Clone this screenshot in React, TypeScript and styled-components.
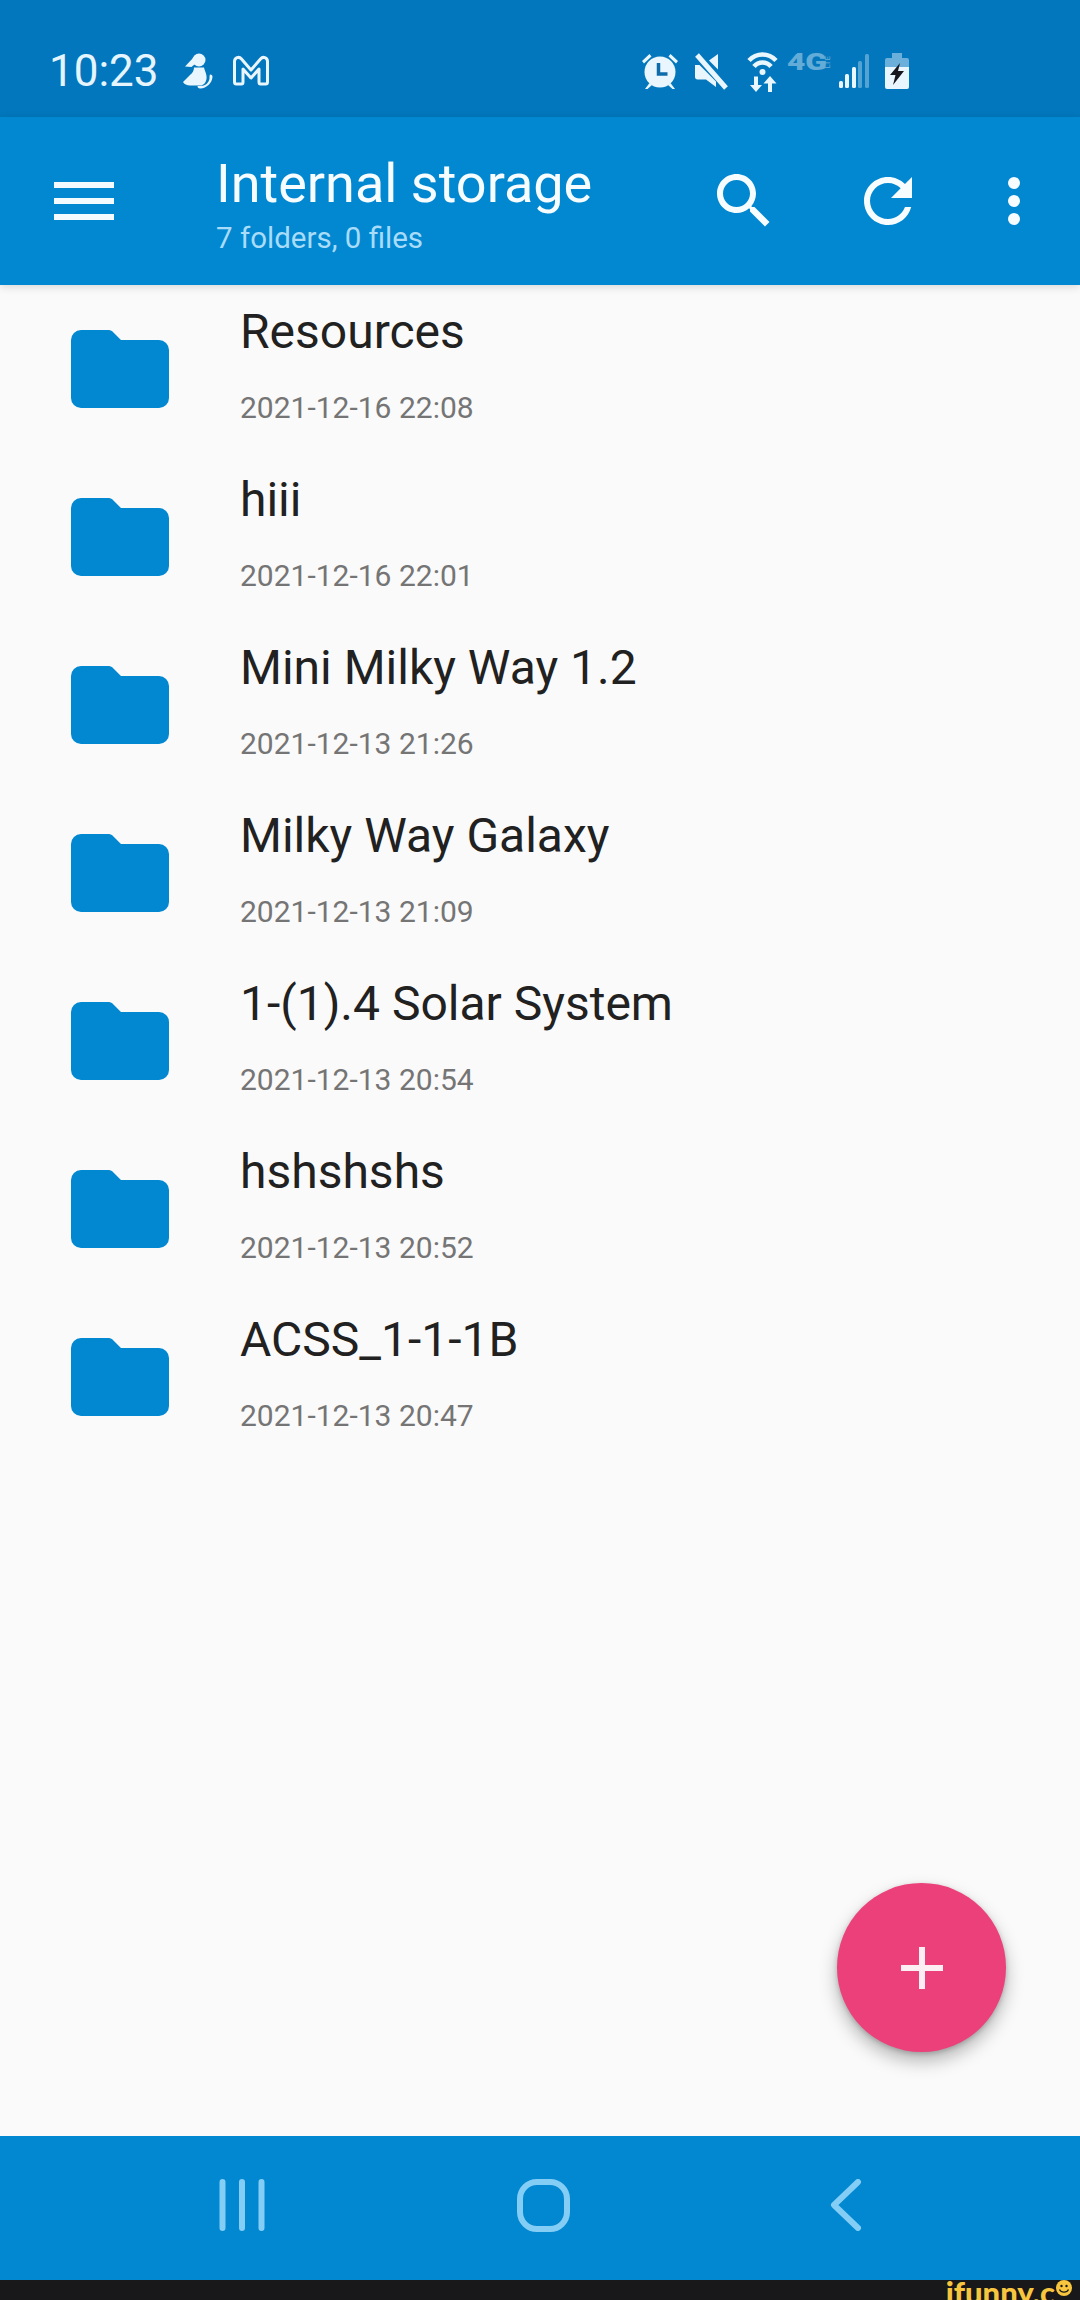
import React from 'react';
import styled, { createGlobalStyle } from 'styled-components';

const folders = [
  { name: 'Resources', date: '2021-12-16 22:08' },
  { name: 'hiii', date: '2021-12-16 22:01' },
  { name: 'Mini Milky Way 1.2', date: '2021-12-13 21:26' },
  { name: 'Milky Way Galaxy', date: '2021-12-13 21:09' },
  { name: '1-(1).4 Solar System', date: '2021-12-13 20:54' },
  { name: 'hshshshs', date: '2021-12-13 20:52' },
  { name: 'ACSS_1-1-1B', date: '2021-12-13 20:47' },
];

const FolderIcon = () => (
  <FolderSvg viewBox="0 0 98 78">
    <path d="M10 0H38a5 5 0 0 1 3.5 1.5L50 10H88a10 10 0 0 1 10 10V68a10 10 0 0 1-10 10H10A10 10 0 0 1 0 68V10A10 10 0 0 1 10 0z" />
  </FolderSvg>
);

const App = () => (
  <>
    <GlobalStyle />
    <Screen>
      <StatusBar>
        <Clock>10:23</Clock>
        <StatusSvg $left={23} width={31} height={36} viewBox="0 0 31 36">
          <circle cx="17" cy="7" r="6.500" />
          <path d="M12 4L3 13.500l6.500.5 4-3.500z" />
          <path d="M12 14.500h10c.5 3 2 5 2.500 8.500.500 4-1 8-5 9.500H8c-3 0-6-1.500-7-3.500l7-7c2.500-2 4-4 4-7.500z" />
          <path d="M28 21.500c2 0 2.500 1 2.500 2.500-.5 6.500-6 11-12 11.500-2 .2-3-1-3-2.500h3.500c4 0 8-3 8.500-7.500 0-2 0-3 .5-4z" />
        </StatusSvg>
        <StatusSvg $left={19} width={38} height={32} viewBox="0 0 38 32">
          <path d="M2.500 27V6.500C2.500 2.500 7 1 9.500 4L19 15 28.500 4C31 1 35.500 2.500 35.500 6.500V27c0 1-.5 2-2 2h-5c-1 0-1.500-1-1.500-2V14l-8 9-8-9v13c0 1-.5 2-1.500 2h-5c-1.500 0-2-1-2-2z" fill="none" stroke="#eaf6fd" strokeWidth="3" strokeLinejoin="round" />
        </StatusSvg>
        <StatusIcons>
          <StatusSvg width={38} height={36} viewBox="0 0 38 36">
            <circle cx="19" cy="19" r="15.500" />
            <path d="M1 8L8.500 1l2 2.500L3 10.500zM37 8L29.500 1l-2 2.500L35 10.500zM4 36l4.500-6 2.500 2-4.500 4zM34 36l-4.500-6-2.500 2 4.500 4z" />
            <path d="M17.500 10v11h9" fill="none" stroke="#0f6cab" strokeWidth="3.500" />
          </StatusSvg>
          <StatusSvg $left={16} width={33} height={37} viewBox="0 0 33 37">
            <path d="M0 12h4.500L21 28.500V34l-10-7.500H2.500C1 26.500 0 25.500 0 24z" />
            <path d="M23 1v15.500L14 7.500z" />
            <path d="M2 2l29 33" stroke="#eaf6fd" strokeWidth="5" fill="none" />
          </StatusSvg>
          <StatusSvg $left={19} width={31} height={41} viewBox="0 0 31 41">
            <path d="M2 9.500C9.500 1.500 21.500 1.500 29 9.500M7 15.500C11.500 10 19.500 10 24 15.500" fill="none" stroke="#eaf6fd" strokeWidth="4.500" />
            <circle cx="15.500" cy="21" r="3" />
            <path d="M7 25.500h4v8.500h4l-6 7-6-7h4zM23 25l6.500 7.500h-4.500V41h-4v-8.500H16.500z" />
          </StatusSvg>
          <NetworkType>
            <NetworkLabel>4G</NetworkLabel>
            <LteLabel>LTE</LteLabel>
          </NetworkType>
          <SignalBars>
            {[7, 14, 21, 27, 34].map((h, i) => (
              <SignalBar key={h} $height={h} $dim={i > 2} />
            ))}
          </SignalBars>
          <StatusSvg $left={16} width={24} height={36} viewBox="0 0 24 36">
            <path d="M7 0h10v5h5a2 2 0 0 1 2 2v7H0V7a2 2 0 0 1 2-2h5z" opacity=".45" />
            <path d="M0 14h24v20a2 2 0 0 1-2 2H2a2 2 0 0 1-2-2z" />
            <path d="M15 10L5 22h5.500L8 32l11-14h-6z" fill="#17171f" />
          </StatusSvg>
        </StatusIcons>
      </StatusBar>

      <AppBar>
        <MenuIcon>
          <span />
          <span />
          <span />
        </MenuIcon>
        <TitleBlock>
          <Title>Internal storage</Title>
          <Subtitle>7 folders, 0 files</Subtitle>
        </TitleBlock>
        <ActionIcon $left={0} viewBox="0 0 24 24">
          <path d="M15.500 14h-.79l-.28-.27C15.410 12.590 16 11.110 16 9.500 16 5.910 13.090 3 9.500 3S3 5.910 3 9.500 5.910 16 9.500 16c1.610 0 3.090-.59 4.230-1.570l.27.28v.79l5 4.990L20.490 19l-4.990-5zm-6 0C7.010 14 5 11.990 5 9.500S7.010 5 9.500 5 14 7.010 14 9.500 11.990 14 9.500 14z" />
        </ActionIcon>
        <ActionIcon $left={72} viewBox="0 0 24 24">
          <path d="M17.650 6.350C16.200 4.900 14.210 4 12 4c-4.420 0-7.990 3.580-7.990 8s3.570 8 7.990 8c3.730 0 6.840-2.550 7.730-6h-2.080c-.82 2.330-3.040 4-5.650 4-3.310 0-6-2.690-6-6s2.690-6 6-6c1.660 0 3.140.69 4.220 1.780L13 11h7V4l-2.350 2.350z" />
        </ActionIcon>
        <ActionIcon $left={54} viewBox="0 0 24 24">
          <circle cx="12" cy="6" r="2" />
          <circle cx="12" cy="12" r="2" />
          <circle cx="12" cy="18" r="2" />
        </ActionIcon>
      </AppBar>

      <FileList>
        {folders.map((f) => (
          <FolderRow key={f.name}>
            <FolderIcon />
            <FolderText>
              <FolderName>{f.name}</FolderName>
              <FolderDate>{f.date}</FolderDate>
            </FolderText>
          </FolderRow>
        ))}
        <Fab>
          <svg width="42" height="42" viewBox="0 0 42 42">
            <path d="M18 0h6v18h18v6H24v18h-6V24H0v-6h18z" fill="#fdeef4" />
          </svg>
        </Fab>
      </FileList>

      <NavBar>
        <NavButton>
          <svg width="46" height="52" viewBox="0 0 46 52">
            <path d="M3.500 3v46M23 3v46M42.500 3v46" stroke="#84cdf5" strokeWidth="6" strokeLinecap="round" fill="none" />
          </svg>
        </NavButton>
        <NavButton>
          <HomeKey />
        </NavButton>
        <NavButton>
          <svg width="32" height="52" viewBox="0 0 32 52">
            <path d="M28 3L4 26l24 23" stroke="#84cdf5" strokeWidth="6" strokeLinecap="round" strokeLinejoin="round" fill="none" />
          </svg>
        </NavButton>
      </NavBar>

      <Watermark>
        ifunny.c
        <svg width="16" height="16" viewBox="0 0 16 16">
          <circle cx="8" cy="8" r="8" fill="#f7c63e" />
          <circle cx="5.500" cy="6" r="1.200" fill="#18181a" />
          <circle cx="10.500" cy="6" r="1.200" fill="#18181a" />
          <path d="M3.500 9.500c1.500 3.500 7.500 3.500 9 0" fill="none" stroke="#18181a" strokeWidth="1.300" />
        </svg>
      </Watermark>
    </Screen>
  </>
);

export default App;

const GlobalStyle = createGlobalStyle`
  html, body {
    margin: 0;
    padding: 0;
    background: #fafafa;
  }
  * {
    box-sizing: border-box;
  }
`;

const Screen = styled.div`
  display: flex;
  flex-direction: column;
  width: 1080px;
  height: 2300px;
  overflow: hidden;
  font-family: Roboto, "Liberation Sans", sans-serif;
  background: #fafafa;
`;

const StatusBar = styled.div`
  display: flex;
  align-items: center;
  height: 117px;
  padding: 25px 0 0 49px;
  background: #0277bd;
  flex-shrink: 0;
`;

const Clock = styled.div`
  font-size: 44px;
  color: #e6f5fd;
`;

const StatusIcons = styled.div`
  display: flex;
  align-items: center;
  margin-left: 371px;
`;

const StatusSvg = styled.svg<{ $left?: number }>`
  display: block;
  flex-shrink: 0;
  margin-left: ${(p) => p.$left || 0}px;
  fill: #eaf6fd;
`;

const NetworkType = styled.div`
  display: flex;
  align-items: center;
  justify-content: space-between;
  margin: -18px 0 0 9px;
  width: 45px;
  height: 18px;
  opacity: 0.42;
  color: #eaf6fd;
`;

const NetworkLabel = styled.span`
  display: block;
  font-size: 24px;
  line-height: 18px;
  font-weight: 900;
  transform: scaleX(1.32);
  transform-origin: left center;
`;

const LteLabel = styled.span`
  font-size: 8px;
  line-height: 8px;
  writing-mode: vertical-rl;
  transform: rotate(180deg);
`;

const SignalBars = styled.div`
  display: flex;
  align-items: flex-end;
  gap: 2.500px;
  height: 34px;
  margin-left: 7px;
`;

const SignalBar = styled.div<{ $height: number; $dim: boolean }>`
  width: 4px;
  height: ${(p) => p.$height}px;
  border-radius: 1.500px;
  background: #eaf6fd;
  opacity: ${(p) => (p.$dim ? 0.35 : 1)};
`;

const AppBar = styled.div`
  position: relative;
  z-index: 1;
  display: flex;
  align-items: center;
  height: 168px;
  padding-left: 54px;
  background: #0288d1;
  box-shadow: 0 2px 8px rgba(0, 0, 0, 0.14);
  flex-shrink: 0;
`;

const MenuIcon = styled.div`
  display: flex;
  flex-direction: column;
  gap: 10px;
  width: 60px;

  span {
    display: block;
    height: 6px;
    background: #f4fbff;
  }
`;

const TitleBlock = styled.div`
  display: flex;
  flex-direction: column;
  margin-left: 102px;
  padding-top: 8px;
  width: 492px;
`;

const Title = styled.div`
  font-size: 54px;
  line-height: 60px;
  color: #f7fcff;
`;

const Subtitle = styled.div`
  margin-top: 6px;
  font-size: 29.500px;
  line-height: 36px;
  color: #a8dcf8;
`;

const ActionIcon = styled.svg<{ $left: number }>`
  display: block;
  width: 72px;
  height: 72px;
  flex-shrink: 0;
  margin-left: ${(p) => p.$left}px;
  fill: #f7fcff;
`;

const FileList = styled.div`
  position: relative;
  flex: 1;
  display: flex;
  flex-direction: column;
`;

const FolderRow = styled.div`
  display: flex;
  align-items: center;
  height: 168px;
  padding-left: 71px;
`;

const FolderSvg = styled.svg`
  display: block;
  width: 98px;
  height: 78px;
  fill: #0288d1;
  flex-shrink: 0;
`;

const FolderText = styled.div`
  display: flex;
  flex-direction: column;
  margin-left: 71px;
  padding-bottom: 7px;
`;

const FolderName = styled.div`
  font-size: 48px;
  line-height: 54px;
  color: #212121;
`;

const FolderDate = styled.div`
  margin-top: 31px;
  font-size: 30px;
  line-height: 36px;
  color: #757575;
`;

const Fab = styled.div`
  position: absolute;
  right: 74px;
  bottom: 84px;
  display: flex;
  align-items: center;
  justify-content: center;
  width: 169px;
  height: 169px;
  border-radius: 50%;
  background: #ec407a;
  box-shadow: 0 9px 18px rgba(0, 0, 0, 0.28), 0 2px 5px rgba(0, 0, 0, 0.18);
`;

const NavBar = styled.div`
  display: flex;
  align-items: center;
  justify-content: center;
  height: 144px;
  padding: 0 0 6px 7px;
  background: #0288d1;
  flex-shrink: 0;
`;

const NavButton = styled.div`
  display: flex;
  align-items: center;
  justify-content: center;
  width: 302px;
`;

const HomeKey = styled.div`
  width: 53px;
  height: 53px;
  border: 6px solid #84cdf5;
  border-radius: 20px;
`;

const Watermark = styled.div`
  display: flex;
  align-items: flex-start;
  justify-content: flex-end;
  gap: 1px;
  height: 20px;
  padding-right: 8px;
  overflow: hidden;
  background: #18181a;
  font-family: Lato, sans-serif;
  font-size: 31px;
  font-weight: 900;
  line-height: 24px;
  color: #f7c63e;
`;
